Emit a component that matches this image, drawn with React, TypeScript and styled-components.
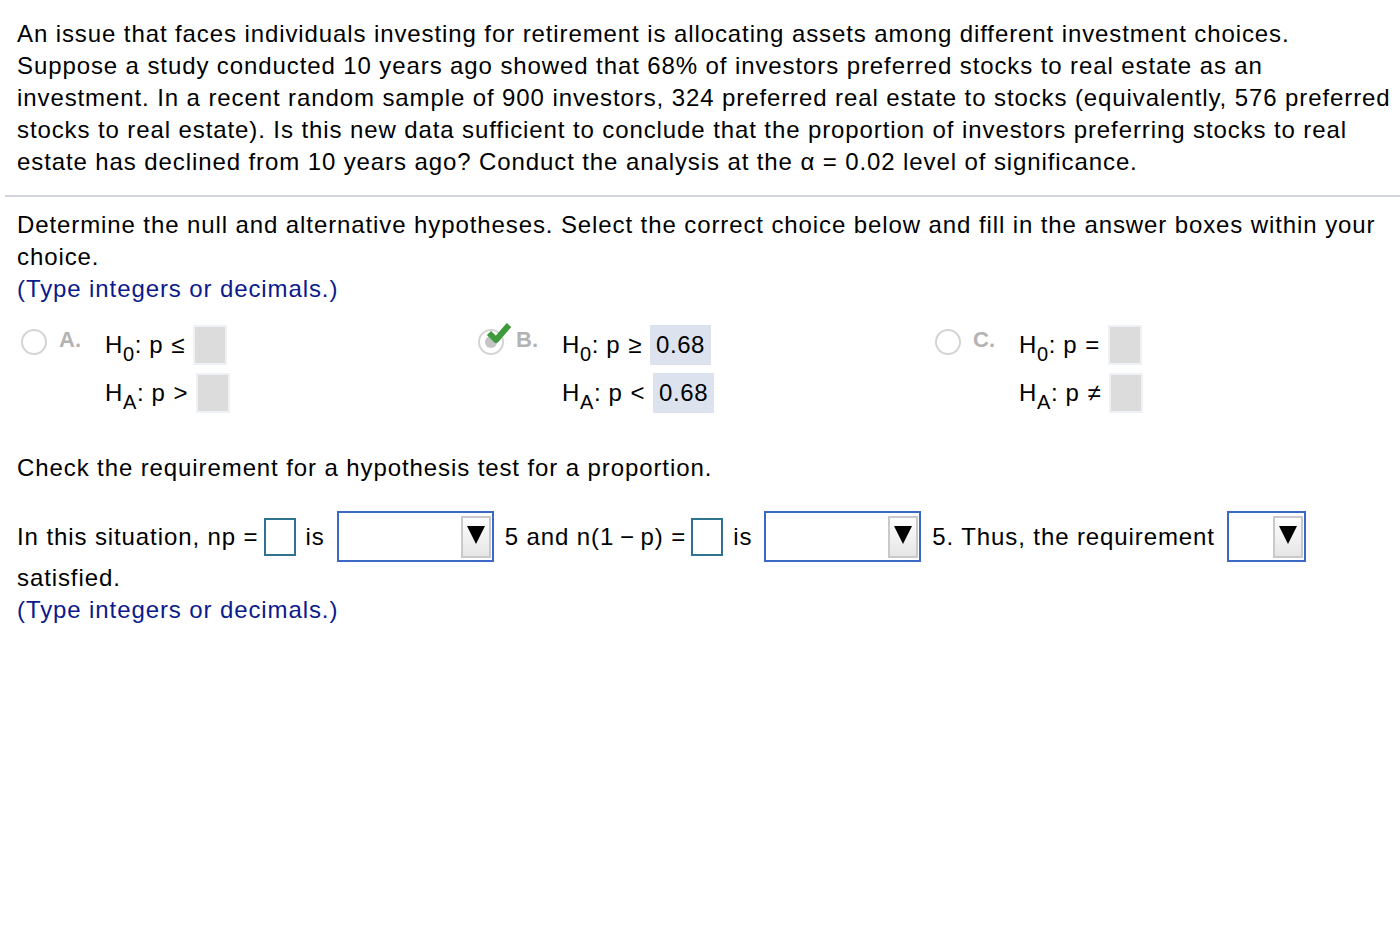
import React from "react";
import styled, { createGlobalStyle } from "styled-components";

const Global = createGlobalStyle`
  html, body { margin: 0; padding: 0; background: #fff; }
  body { font-family: "Liberation Sans", Arial, sans-serif; color: #000; }
`;

const Page = styled.div`
  width: 1400px;
  min-height: 927px;
  box-sizing: border-box;
  padding-top: 18px;
  letter-spacing: 0.9px;
`;

const Stem = styled.div`
  padding: 0 8px 0 17px;
  font-size: 24px;
  line-height: 32px;
`;

const Divider = styled.hr`
  margin: 17px 0 0 5px;
  border: 0;
  height: 2px;
  background: #d2d5de;
`;

const Section = styled.div`
  padding: 12px 10px 0 17px;
  font-size: 24px;
  line-height: 32px;
`;

const Hint = styled.div`
  color: #0b1a8c;
`;

const Choices = styled.div`
  display: grid;
  grid-template-columns: 457px 457px 1fr;
  margin-top: 20px;
  margin-left: 4px;
`;

const Choice = styled.div`
  display: flex;
  align-items: flex-start;
`;

const RadioWrap = styled.div`
  position: relative;
  width: 26px;
  height: 26px;
  margin-top: 4px;
  flex: none;
`;

const Radio = styled.div<{ $checked?: boolean }>`
  width: 22px;
  height: 22px;
  border-radius: 50%;
  border: 2px solid #d4d4d4;
  background: #fff;
  box-sizing: content-box;
  display: flex;
  align-items: center;
  justify-content: center;
  &::after {
    content: "";
    display: ${(p) => (p.$checked ? "block" : "none")};
    width: 12px;
    height: 12px;
    border-radius: 50%;
    background: #c4c4c4;
  }
`;

const Check = styled.svg`
  position: absolute;
  left: 8px;
  top: -8px;
`;

const Letter = styled.div`
  font-weight: bold;
  color: #b3b3b3;
  font-size: 22px;
  line-height: 26px;
  letter-spacing: 0;
  margin: 2px 0 0 12px;
  width: 46px;
  flex: none;
`;

const Hyps = styled.div`
  display: flex;
  flex-direction: column;
  gap: 9px;
`;

const HypRow = styled.div`
  display: flex;
  align-items: center;
  height: 39px;
  font-size: 24px;
  letter-spacing: 0.6px;
`;

const Sub = styled.sub`
  font-size: 20px;
  vertical-align: -8px;
  line-height: 0;
`;

const Op = styled.span`
  margin: 0 6px 0 8px;
`;

const EmptyBox = styled.span`
  display: inline-block;
  width: 30px;
  height: 36px;
  background: #dcdcdc;
  border: 2px solid #eef1f6;
  margin-left: 2px;
`;

const Filled = styled.span`
  display: inline-block;
  background: #dce3ef;
  padding: 2px 6px;
  line-height: 36px;
  margin-left: 2px;
`;

const Requirement = styled.div`
  margin-top: 40px;
`;

const InlineRow = styled.div`
  margin-top: 27px;
  display: flex;
  align-items: center;
  flex-wrap: wrap;
  line-height: 32px;
`;

const InBox = styled.span`
  display: inline-block;
  width: 28px;
  height: 34px;
  border: 2px solid #2f7391;
  margin: 0 10px 0 5px;
`;

const Select = styled.span<{ $w: number }>`
  display: inline-flex;
  justify-content: flex-end;
  align-items: center;
  box-sizing: border-box;
  width: ${(p) => p.$w}px;
  height: 51px;
  border: 2px solid #3d69c6;
  background: #fff;
  padding-right: 1px;
  margin: 0 11px 0 12px;
`;

const SelBtn = styled.span`
  width: 26px;
  height: 36px;
  border: 2px solid #c9c9c9;
  background: linear-gradient(#fdfdfd, #e6e6e6);
  display: flex;
  align-items: flex-start;
  justify-content: center;
  padding-top: 2px;
  box-sizing: content-box;
`;

const Tri = styled.svg`
  margin-top: 5px;
`;

const Line2 = styled.div`
  margin-top: 0;
`;

const Dropdown = ({ w }: { w: number }) => (
  <Select $w={w}>
    <SelBtn>
      <Tri width="20" height="20" viewBox="0 0 20 20">
        <polygon points="1,1 19,1 10,19" fill="#000" />
      </Tri>
    </SelBtn>
  </Select>
);

const H = ({ s }: { s: string }) => (
  <span>
    H<Sub>{s}</Sub>
  </span>
);

export default function App() {
  return (
    <Page>
      <Global />
      <Stem>
        An issue that faces individuals investing for retirement is allocating assets among different investment choices.
        <br />
        Suppose a study conducted 10 years ago showed that 68% of investors preferred stocks to real estate as an
        <br />
        investment. In a recent random sample of 900 investors, 324 preferred real estate to stocks (equivalently, 576 preferred
        <br />
        stocks to real estate). Is this new data sufficient to conclude that the proportion of investors preferring stocks to real
        <br />
        estate has declined from 10 years ago? Conduct the analysis at the α = 0.02 level of significance.
      </Stem>
      <Divider />
      <Section>
        <div>
          Determine the null and alternative hypotheses. Select the correct choice below and fill in the answer boxes
          within your choice.
        </div>
        <Hint>(Type integers or decimals.)</Hint>
        <Choices>
          <Choice>
            <RadioWrap>
              <Radio />
            </RadioWrap>
            <Letter>A.</Letter>
            <Hyps>
              <HypRow>
                <H s="0" />: p<Op>≤</Op>
                <EmptyBox />
              </HypRow>
              <HypRow>
                <H s="A" />: p<Op>&gt;</Op>
                <EmptyBox />
              </HypRow>
            </Hyps>
          </Choice>
          <Choice>
            <RadioWrap>
              <Radio $checked />
              <Check width="26" height="24" viewBox="0 0 26 24">
                <path d="M3 12 L10 19 L23 4" stroke="#3e9a3a" strokeWidth="6" fill="none" strokeLinejoin="round" />
              </Check>
            </RadioWrap>
            <Letter>B.</Letter>
            <Hyps>
              <HypRow>
                <H s="0" />: p<Op>≥</Op>
                <Filled>0.68</Filled>
              </HypRow>
              <HypRow>
                <H s="A" />: p<Op>&lt;</Op>
                <Filled>0.68</Filled>
              </HypRow>
            </Hyps>
          </Choice>
          <Choice>
            <RadioWrap>
              <Radio />
            </RadioWrap>
            <Letter>C.</Letter>
            <Hyps>
              <HypRow>
                <H s="0" />: p<Op>=</Op>
                <EmptyBox />
              </HypRow>
              <HypRow>
                <H s="A" />: p<Op>≠</Op>
                <EmptyBox />
              </HypRow>
            </Hyps>
          </Choice>
        </Choices>
        <Requirement>Check the requirement for a hypothesis test for a proportion.</Requirement>
        <InlineRow>
          <span>In this situation, np =</span>
          <InBox />
          <span>is</span>
          <Dropdown w={157} />
          <span>5 and n(1{"\u2009"}−{"\u2009"}p) =</span>
          <InBox />
          <span>is</span>
          <Dropdown w={157} />
          <span>5. Thus, the requirement</span>
          <Dropdown w={79} />
        </InlineRow>
        <Line2>satisfied.</Line2>
        <Hint>(Type integers or decimals.)</Hint>
      </Section>
    </Page>
  );
}
